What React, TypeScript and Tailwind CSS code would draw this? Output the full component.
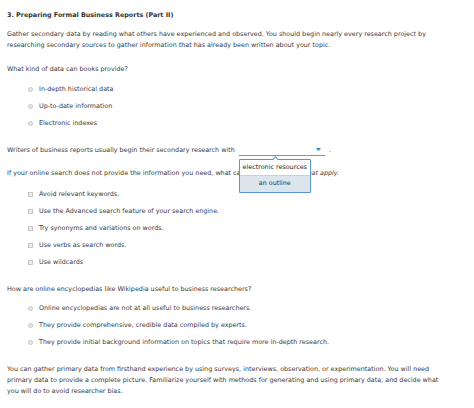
import React from 'react';

const Radio = () => (
  <span className="inline-block w-[5px] h-[5px] rounded-full border border-[#c6c6c6] bg-[#e9e9e9] shrink-0" />
);

const Check = () => (
  <span className="inline-block w-[5px] h-[5px] border border-[#c6c6c6] bg-[#ececec] shrink-0" />
);

function Option({ kind, label }: { kind: 'radio' | 'check'; label: string }) {
  return (
    <div className="flex items-center gap-[6px] pl-[21px] h-[11px]">
      {kind === 'radio' ? <Radio /> : <Check />}
      <span>{label}</span>
    </div>
  );
}

export default function App() {
  return (
    <div
      className="w-[474px] h-[408px] bg-white text-[#3a3a3a] text-[6.4px] leading-[11px] px-[7px] pt-[9.5px] overflow-hidden"
      style={{ fontFamily: '"DejaVu Sans", Verdana, sans-serif' }}
    >
      <p className="font-bold text-[#333]">3. Preparing Formal Business Reports (Part II)</p>

      <p className="mt-[8px]">
        Gather secondary data by reading what others have experienced and observed. You should begin nearly every research project by
        <br />
        researching secondary sources to gather information that has already been written about your topic.
      </p>

      <p className="mt-[13px]">What kind of data can books provide?</p>
      <div className="mt-[9px] flex flex-col gap-[6px]">
        <Option kind="radio" label="In-depth historical data" />
        <Option kind="radio" label="Up-to-date information" />
        <Option kind="radio" label="Electronic indexes" />
      </div>

      <div className="mt-[16px] flex items-center h-[11px]">
        <span>Writers of business reports usually begin their secondary research with</span>
        <span className="relative ml-[4px] w-[86px] h-[11px] border-b border-[#6b9ccc]">
          <svg className="absolute right-[4px] top-[3px]" width="5" height="3" viewBox="0 0 5 3">
            <path d="M0 0 L5 0 L2.5 3 Z" fill="#3d7fc0" />
          </svg>
          <div className="absolute left-0 top-[14px] w-[72px] border border-[#5a94c9] bg-white rounded-[1px] shadow-[0_0_1px_rgba(0,0,0,0.2)] z-10">
            <svg className="absolute left-[32px] -top-[4px]" width="7" height="4" viewBox="0 0 7 4">
              <path d="M0 4 L3.5 0 L7 4 Z" fill="#5a94c9" />
              <path d="M1.3 4 L3.5 1.5 L5.7 4 Z" fill="#ffffff" />
            </svg>
            <div className="h-[15px] flex items-center justify-center text-[#222] bg-white">electronic resources</div>
            <div className="h-[17px] flex items-center justify-center text-[#333] bg-[#dde5ec] border-t border-[#c4d3e0]">an outline</div>
          </div>
        </span>
        <span className="ml-[4px]">.</span>
      </div>

      <p className="mt-[12px]">
        If your online search does not provide the information you need, what can you do? Check all <i>that apply.</i>
      </p>
      <div className="mt-[10px] flex flex-col gap-[6px]">
        <Option kind="check" label="Avoid relevant keywords." />
        <Option kind="check" label="Use the Advanced search feature of your search engine." />
        <Option kind="check" label="Try synonyms and variations on words." />
        <Option kind="check" label="Use verbs as search words." />
        <Option kind="check" label="Use wildcards" />
      </div>

      <p className="mt-[16px]">How are online encyclopedias like Wikipedia useful to business researchers?</p>
      <div className="mt-[8px] flex flex-col gap-[6px]">
        <Option kind="radio" label="Online encyclopedias are not at all useful to business researchers." />
        <Option kind="radio" label="They provide comprehensive, credible data compiled by experts." />
        <Option kind="radio" label="They provide initial background information on topics that require more in-depth research." />
      </div>

      <p className="mt-[16px]">
        You can gather primary data from firsthand experience by using surveys, interviews, observation, or experimentation. You will need
        <br />
        primary data to provide a complete picture. Familiarize yourself with methods for generating and using primary data, and decide what
        <br />
        you will do to avoid researcher bias.
      </p>
    </div>
  );
}
